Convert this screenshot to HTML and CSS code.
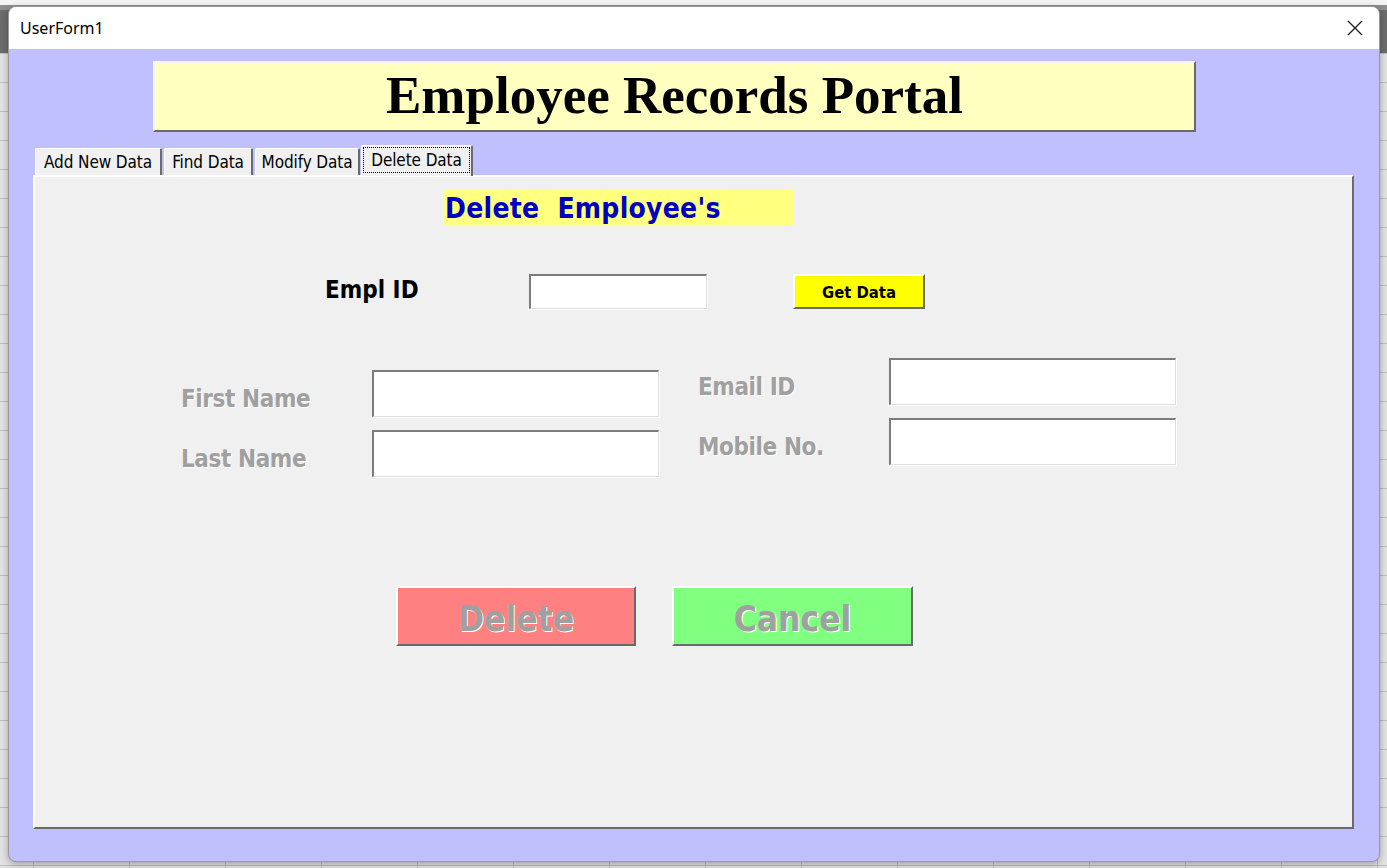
FILE: index.html
```html
<!DOCTYPE html>
<html lang="en">
<head>
<meta charset="utf-8">
<title>UserForm1</title>
<link rel="stylesheet" href="styles.css">
</head>
<body>
<div class="window">
  <div class="titlebar">
    <span class="title">UserForm1</span>
    <svg class="close" width="16" height="16" viewBox="0 0 16 16" aria-hidden="true">
      <path d="M1 1 L15 15 M15 1 L1 15" stroke="#1b1b1b" stroke-width="1.3" fill="none"/>
    </svg>
  </div>
  <div class="client">
    <div class="banner">Employee Records Portal</div>
    <div class="tabs">
      <div class="tab tab-add">Add New Data</div>
      <div class="tab tab-find">Find Data</div>
      <div class="tab tab-modify">Modify Data</div>
      <div class="tab tab-delete active"><span class="focus">Delete Data</span></div>
    </div>
    <div class="page">
      <div class="heading">Delete  Employee's</div>
      <div class="id-row">
        <div class="id-label">Empl ID</div>
        <div class="textbox id-box"></div>
        <div class="get-btn">Get Data</div>
      </div>
      <div class="fields">
        <div class="group group-left">
          <div class="field"><div class="flabel">First Name</div><div class="textbox big"></div></div>
          <div class="field"><div class="flabel">Last Name</div><div class="textbox big"></div></div>
        </div>
        <div class="group group-right">
          <div class="field"><div class="flabel">Email ID</div><div class="textbox big"></div></div>
          <div class="field"><div class="flabel">Mobile No.</div><div class="textbox big"></div></div>
        </div>
      </div>
      <div class="actions">
        <div class="btn btn-delete">Delete</div>
        <div class="btn btn-cancel">Cancel</div>
      </div>
    </div>
  </div>
</div>
</body>
</html>
```
FILE: styles.css
```css
* { box-sizing: border-box; }

body {
  margin: 0;
  width: 1387px;
  height: 868px;
  overflow: hidden;
  position: relative;
  background:
    linear-gradient(to bottom, #f4f4f4 0 5px, #8e8e8e 5px 10px, #6c6c6c 10px 53px, transparent 53px),
    repeating-linear-gradient(to right, transparent 0 33px, #bdbdbd 33px 34px, transparent 34px 96px),
    repeating-linear-gradient(to bottom, transparent 0 24px, #bdbdbd 24px 25px, transparent 25px 29px),
    #e2e2e2;
  font-family: "DejaVu Sans Condensed", "DejaVu Sans", sans-serif;
  font-stretch: condensed;
}

.window {
  position: absolute;
  left: 8px;
  top: 6px;
  width: 1372px;
  height: 856px;
  border: 1px solid #9a9a9a;
  border-radius: 8px;
  overflow: hidden;
  background: #c0c0ff;
  box-shadow: 0 2px 7px rgba(0, 0, 0, 0.3);
  display: flex;
  flex-direction: column;
}

.titlebar {
  height: 42px;
  flex: none;
  background: #ffffff;
  display: flex;
  align-items: center;
  justify-content: space-between;
  padding: 0 16px 0 11px;
}

.title {
  font-family: "Noto Sans", "Open Sans", sans-serif;
  font-stretch: normal;
  font-size: 16px;
  color: #000;
  padding-bottom: 1px;
}

.close { display: block; }

.client {
  flex: 1;
  padding-left: 24px;
  display: flex;
  flex-direction: column;
  align-items: flex-start;
}

.banner {
  margin: 12px 0 0 120px;
  width: 1043px;
  height: 71px;
  background: #ffffc0;
  border: 2px solid;
  border-color: #f6f6f6 #6a6a6a #6a6a6a #f6f6f6;
  font-family: "Liberation Serif", "Times New Roman", serif;
  font-stretch: normal;
  font-weight: bold;
  font-size: 53px;
  line-height: 64px;
  text-align: center;
  color: #000;
}

.tabs {
  margin: 13px 0 0 2px;
  height: 30px;
  display: flex;
  align-items: flex-end;
}

.tab {
  height: 27px;
  background: #f0f0f0;
  border-top: 1px solid #ffffff;
  border-left: 1px solid #ffffff;
  border-right: 2px solid #6a6a6a;
  border-radius: 2px 2px 0 0;
  font-size: 17px;
  line-height: 26px;
  letter-spacing: -0.1px;
  text-align: center;
  color: #000;
  white-space: nowrap;
}

.tab-add { width: 127px; margin-right: 2px; }
.tab-find { width: 89px; margin-right: 2px; }
.tab-modify { width: 105px; margin-right: 1px; }

.tab.active {
  width: 112px;
  height: 31px;
  margin-bottom: -1px;
  position: relative;
  z-index: 1;
  padding: 1px 1px 0 1px;
}

.focus {
  display: block;
  height: 26px;
  border: 1px dotted #000;
  line-height: 24px;
}

.page {
  width: 1321px;
  height: 654px;
  background: #f0f0f0;
  border: 2px solid;
  border-color: #ffffff #6a6a6a #6a6a6a #ffffff;
  display: flex;
  flex-direction: column;
  align-items: flex-start;
}

.heading {
  margin: 13px 0 0 408px;
  width: 350px;
  height: 35px;
  padding: 2px 0 0 2px;
  background: #ffff80;
  color: #0000c0;
  font-weight: bold;
  font-size: 28px;
  line-height: 33px;
  letter-spacing: 0.25px;
  white-space: pre;
}

.id-row {
  margin: 49px 0 0 290px;
  height: 35px;
  display: flex;
}

.id-label {
  width: 204px;
  padding-top: 4px;
  font-weight: bold;
  font-size: 24px;
  line-height: 24px;
  color: #000;
}

.textbox {
  background: #ffffff;
  border-style: solid;
  border-width: 2px 1px 1px 2px;
  border-color: #7c7c7c #dedede #dedede #7c7c7c;
  box-shadow: 1px 1px 0 #ffffff;
}

.id-box { width: 178px; height: 35px; }

.get-btn {
  margin-left: 86px;
  width: 132px;
  height: 35px;
  background: #ffff00;
  border: 2px solid;
  border-color: #ffffff #6a6a6a #6a6a6a #ffffff;
  display: flex;
  align-items: center;
  justify-content: center;
  padding-top: 3px;
  font-weight: bold;
  font-size: 16.5px;
  line-height: 1;
  color: #000;
}

.fields {
  margin: 49px 0 0 146px;
  display: flex;
  align-items: flex-start;
}

.group {
  display: flex;
  flex-direction: column;
  gap: 13px;
}

.group-left { margin-top: 12px; }
.group-right { margin-left: 39px; }

.field { display: flex; }

.flabel {
  width: 191px;
  padding-top: 17px;
  font-weight: bold;
  font-size: 24px;
  line-height: 24px;
  letter-spacing: -0.4px;
  color: #a0a0a0;
  text-shadow: 1px 1px 0 #ffffff;
  white-space: nowrap;
}

.big { width: 287px; height: 47px; }

.actions {
  margin: 109px 0 0 361px;
  display: flex;
  gap: 36px;
}

.btn {
  height: 60px;
  border: 2px solid;
  border-color: #ffffff #6a6a6a #6a6a6a #ffffff;
  display: flex;
  align-items: center;
  justify-content: center;
  padding-top: 6px;
  font-weight: bold;
  font-size: 35px;
  line-height: 35px;
  color: #a0a0a0;
  text-shadow: 1px 1px 0 #ffffff;
}

.btn-delete { width: 240px; background: #ff8080; }
.btn-cancel { width: 241px; background: #80ff80; }
```
